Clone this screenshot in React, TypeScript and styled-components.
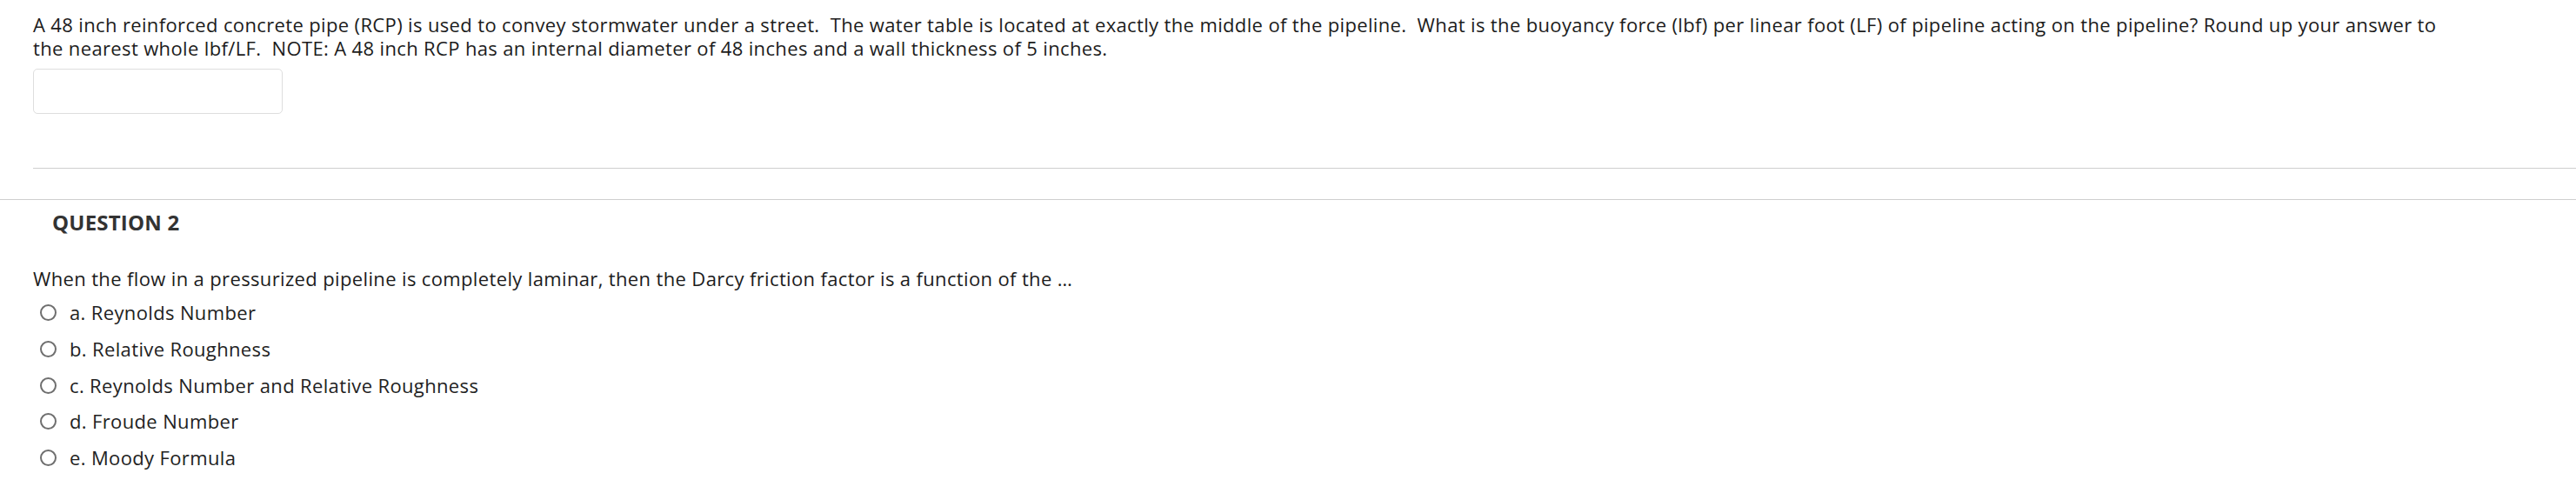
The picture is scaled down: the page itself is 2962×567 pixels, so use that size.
import React from 'react';
import styled, {createGlobalStyle} from "styled-components";

const GlobalStyle = createGlobalStyle`
    html, body {
        margin: 0;
        padding: 0;
        background: #fff;
    }
    body {
        font-family: "Open Sans", "Noto Sans", "Liberation Sans", sans-serif;
        color: #1c1c1c;
    }
`

const options = [
    'a. Reynolds Number',
    'b. Relative Roughness',
    'c. Reynolds Number and Relative Roughness',
    'd. Froude Number',
    'e. Moody Formula',
];

function App() {
    return (
        <>
            <GlobalStyle/>
            <Page>
                <QuestionBody>
                    <Prompt>
                        A 48 inch reinforced concrete pipe (RCP) is used to convey stormwater under a street.{'\u00a0'} The
                        water table is located at exactly the middle of the pipeline.{'\u00a0'} What is the buoyancy force
                        (lbf) per linear foot (LF) of pipeline acting on the pipeline? Round up your answer to<br/>
                        the nearest whole lbf/LF.{'\u00a0'} NOTE: A 48 inch RCP has an internal diameter of 48 inches and a
                        wall thickness of 5 inches.
                    </Prompt>
                    <AnswerInput type="text" aria-label="answer"/>
                    <InnerRule/>
                </QuestionBody>
                <OuterRule/>
                <QuestionHeader>QUESTION 2</QuestionHeader>
                <QuestionBody>
                    <Prompt $top={36}>
                        When the flow in a pressurized pipeline is completely laminar, then the Darcy friction factor is a
                        function of the …
                    </Prompt>
                    <OptionList>
                        {options.map((label) => (
                            <OptionRow key={label}>
                                <Radio/>
                                <OptionLabel>{label}</OptionLabel>
                            </OptionRow>
                        ))}
                    </OptionList>
                </QuestionBody>
            </Page>
        </>
    );
}

const Page = styled.div`
    display: flex;
    flex-direction: column;
    padding-top: 15px;
    font-size: 22px;
    line-height: 27px;
    letter-spacing: 0.36px;
`
const QuestionBody = styled.div`
    display: flex;
    flex-direction: column;
    padding-left: 38px;
`
const Prompt = styled.div<{ $top?: number }>`
    margin: ${({$top}) => $top ?? 0}px 0 0 0;
    color: #1c1c1c;
    white-space: normal;
`
const AnswerInput = styled.input`
    box-sizing: border-box;
    width: 287px;
    height: 52px;
    margin-top: 10px;
    border: 1px solid #dedede;
    border-radius: 5px;
    background: #fff;
    outline: none;
`
const InnerRule = styled.div`
    margin-top: 62px;
    height: 0;
    border-top: 1px solid #cfcfcf;
`
const OuterRule = styled.div`
    margin-top: 35px;
    height: 0;
    border-top: 1px solid #cfcfcf;
`
const QuestionHeader = styled.h2`
    margin: 11px 0 0 0;
    padding-left: 60px;
    font-size: 24px;
    line-height: 30px;
    font-weight: 700;
    letter-spacing: 0.2px;
    color: #333;
`
const OptionList = styled.div`
    display: flex;
    flex-direction: column;
    margin-top: 5px;
`
const OptionRow = styled.label`
    display: flex;
    align-items: center;
    gap: 15px;
    height: 41.7px;
    padding-left: 8px;
`
const Radio = styled.span`
    box-sizing: border-box;
    width: 19px;
    height: 19px;
    border: 2px solid #6f6f6f;
    border-radius: 50%;
    flex-shrink: 0;
`
const OptionLabel = styled.span`
    color: #222;
`

export default App;
